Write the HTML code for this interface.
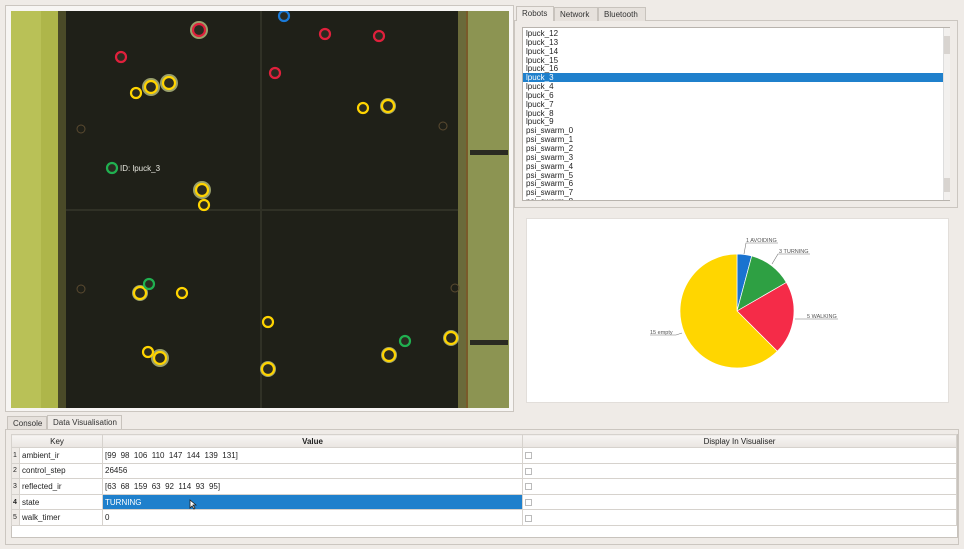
<!DOCTYPE html>
<html><head><meta charset="utf-8"><style>
*{box-sizing:border-box;margin:0;padding:0}
body{width:964px;height:549px;background:#efebe7;font-family:"Liberation Sans","DejaVu Sans",sans-serif;font-size:8px;color:#3c3c3c;position:relative;overflow:hidden}
.abs{position:absolute}
.tab{position:absolute;height:14px;border:1px solid #c8c3bd;border-bottom:none;background:#e6e1dc;font-size:8px;line-height:13px;padding:0 5px;color:#333;white-space:nowrap}
.tab.on{background:#efebe7;height:15px}
.list div{height:8.85px;line-height:9px;padding-left:3px;font-size:8px;color:#222}
.list .sel{background:#1f80cc;color:#fff}
table{border-collapse:collapse;position:absolute;left:11px;top:434px;width:946px;font-size:8px;table-layout:fixed}
td,th{border:1px solid #d6d2cd;height:15.6px;padding:0 2px;color:#222;white-space:pre;overflow:hidden}
th{height:13px;background:linear-gradient(#f7f5f3,#e9e5e1);font-weight:normal;color:#222}
th.b{font-weight:bold}
td.n{padding:0 1px;font-size:7px;background:#efebe7}
.cb{display:inline-block;width:7px;height:7px;border:1px solid #bbb;background:#fff;vertical-align:middle}
</style></head><body>
<div class="abs" style="left:5px;top:5px;width:509px;height:407px;border:1px solid #cbc6c0;background:#f7f5f3"></div>
<svg class="abs" style="left:11px;top:11px" width="498" height="397" viewBox="11 11 498 397">
<rect x="11" y="11" width="498" height="397" fill="#1f2018"/>
<rect x="11" y="11" width="55" height="397" fill="#aeb64a"/>
<rect x="11" y="11" width="30" height="397" fill="#b9c157"/>
<rect x="58" y="11" width="8" height="397" fill="#4a4a28"/>
<rect x="458" y="11" width="51" height="397" fill="#8c9452"/>
<rect x="458" y="11" width="8" height="397" fill="#6a6a3a"/>
<rect x="466" y="11" width="2" height="397" fill="#7a5a2a"/>
<rect x="470" y="150" width="38" height="5" fill="#2a2a22"/>
<rect x="470" y="340" width="38" height="5" fill="#2a2a22"/>
<line x1="261" y1="11" x2="261" y2="408" stroke="#303126" stroke-width="2"/>
<line x1="66" y1="210" x2="458" y2="210" stroke="#303126" stroke-width="2"/>
<g fill="none" stroke="#5a4a30" stroke-width="1"><circle cx="81" cy="129" r="4"/><circle cx="81" cy="289" r="4"/><circle cx="443" cy="126" r="4"/><circle cx="455" cy="288" r="4"/></g>
<g fill="#b8c080" opacity="0.8"><circle cx="199" cy="30" r="9"/><circle cx="151" cy="87" r="9"/><circle cx="169" cy="83" r="9"/><circle cx="388" cy="106" r="8"/><circle cx="202" cy="190" r="9"/><circle cx="140" cy="293" r="8"/><circle cx="160" cy="358" r="9"/><circle cx="268" cy="369" r="8"/><circle cx="389" cy="355" r="8"/><circle cx="451" cy="338" r="8"/></g>
<g stroke-width="2.2" fill="#2a2a20">
<g stroke="#e0203c"><circle cx="199" cy="30" r="6"/><circle cx="121" cy="57" r="5"/><circle cx="325" cy="34" r="5"/><circle cx="379" cy="36" r="5"/><circle cx="275" cy="73" r="5"/></g>
<g stroke="#1a7ad8"><circle cx="284" cy="16" r="5"/></g>
<g stroke="#ffd400"><circle cx="136" cy="93" r="5"/><circle cx="151" cy="87" r="6"/><circle cx="169" cy="83" r="6"/><circle cx="363" cy="108" r="5"/><circle cx="388" cy="106" r="6"/><circle cx="202" cy="190" r="6"/><circle cx="204" cy="205" r="5"/><circle cx="140" cy="293" r="6"/><circle cx="182" cy="293" r="5"/><circle cx="268" cy="322" r="5"/><circle cx="148" cy="352" r="5"/><circle cx="160" cy="358" r="6"/><circle cx="268" cy="369" r="6"/><circle cx="389" cy="355" r="6"/><circle cx="451" cy="338" r="6"/></g>
<g stroke="#20b050"><circle cx="112" cy="168" r="5"/><circle cx="149" cy="284" r="5"/><circle cx="405" cy="341" r="5"/></g>
</g>
<text x="120" y="171" fill="#e8e8e0" font-size="8" font-family="Liberation Sans">ID:  lpuck_3</text>
</svg>
<div class="abs" style="left:514px;top:20px;width:444px;height:188px;border:1px solid #cbc6c0"></div>
<div class="tab on" style="left:516px;top:6px;width:38px">Robots</div>
<div class="tab" style="left:554px;top:7px;width:44px">Network</div>
<div class="tab" style="left:598px;top:7px;width:48px">Bluetooth</div>
<div class="abs list" style="left:522px;top:27px;width:428px;height:174px;border:1px solid #b8b3ad;background:#fff;overflow:hidden;padding-top:1px">
<div>lpuck_12</div><div>lpuck_13</div><div>lpuck_14</div><div>lpuck_15</div><div>lpuck_16</div><div class="sel">lpuck_3</div><div>lpuck_4</div><div>lpuck_6</div><div>lpuck_7</div><div>lpuck_8</div><div>lpuck_9</div><div>psi_swarm_0</div><div>psi_swarm_1</div><div>psi_swarm_2</div><div>psi_swarm_3</div><div>psi_swarm_4</div><div>psi_swarm_5</div><div>psi_swarm_6</div><div>psi_swarm_7</div><div>psi_swarm_8</div>
</div>
<div class="abs" style="left:943px;top:28px;width:7px;height:172px;background:#f2f0ee;border-left:1px solid #ddd"></div>
<div class="abs" style="left:944px;top:36px;width:6px;height:18px;background:#d8d4d0"></div>
<div class="abs" style="left:944px;top:178px;width:6px;height:14px;background:#d8d4d0"></div>
<div class="abs" style="left:526px;top:218px;width:423px;height:185px;background:#fff;border:1px solid #e2deda"></div>
<svg class="abs" style="left:526px;top:218px" width="423" height="185" viewBox="526 218 423 185">
<path d="M737 311 L737 254 A57 57 0 0 1 751.75 255.94 Z" fill="#1a73d0" stroke="#fff" stroke-width="0.7"/>
<path d="M737 311 L751.75 255.94 A57 57 0 0 1 786.36 282.5 Z" fill="#2ea043" stroke="#fff" stroke-width="0.7"/>
<path d="M737 311 L786.36 282.5 A57 57 0 0 1 777.3 351.3 Z" fill="#f52b48" stroke="#fff" stroke-width="0.7"/>
<path d="M737 311 L777.3 351.3 A57 57 0 1 1 737 254 Z" fill="#ffd600" stroke="#fff" stroke-width="0.7"/>
<g fill="none" stroke="#777" stroke-width="0.6">
<polyline points="744,254 746,243 778,243"/><polyline points="772,264 778,254 810,254"/><polyline points="795,319 806,319 838,319"/><polyline points="682,333 676,335 650,335"/>
</g>
<g font-size="5.5" fill="#555" font-family="Liberation Sans">
<text x="746" y="242">1 AVOIDING</text><text x="779" y="253">3 TURNING</text><text x="807" y="318">5 WALKING</text><text x="650" y="334">15 empty</text>
</g>
</svg>
<div class="tab" style="left:7px;top:416px;width:40px">Console</div>
<div class="tab on" style="left:47px;top:415px;width:75px">Data Visualisation</div>
<div class="abs" style="left:5px;top:429px;width:954px;height:116px;border:1px solid #cbc6c0"></div>
<div class="abs" style="left:11px;top:434px;width:947px;height:104px;border:1px solid #c8c3bd;background:#fff"></div>
<table>
<colgroup><col style="width:8px"><col style="width:83px"><col style="width:420px"><col></colgroup>
<tr><th colspan="2">Key</th><th class="b">Value</th><th>Display In Visualiser</th></tr>
<tr><td class="n">1</td><td>ambient_ir</td><td>[99  98  106  110  147  144  139  131]</td><td><span class="cb"></span></td></tr>
<tr><td class="n">2</td><td>control_step</td><td>26456</td><td><span class="cb"></span></td></tr>
<tr><td class="n">3</td><td>reflected_ir</td><td>[63  68  159  63  92  114  93  95]</td><td><span class="cb"></span></td></tr>
<tr><td class="n"><b>4</b></td><td>state</td><td style="background:#1f80cc;color:#fff">TURNING</td><td><span class="cb"></span></td></tr>
<tr><td class="n">5</td><td>walk_timer</td><td>0</td><td><span class="cb"></span></td></tr>
</table>
<svg class="abs" style="left:189px;top:499px" width="8" height="11"><path d="M1 1 L1 9 L3 7 L5 10 L6 9 L4 6 L7 6 Z" fill="#fff" stroke="#222" stroke-width="0.8"/></svg>
</body></html>
